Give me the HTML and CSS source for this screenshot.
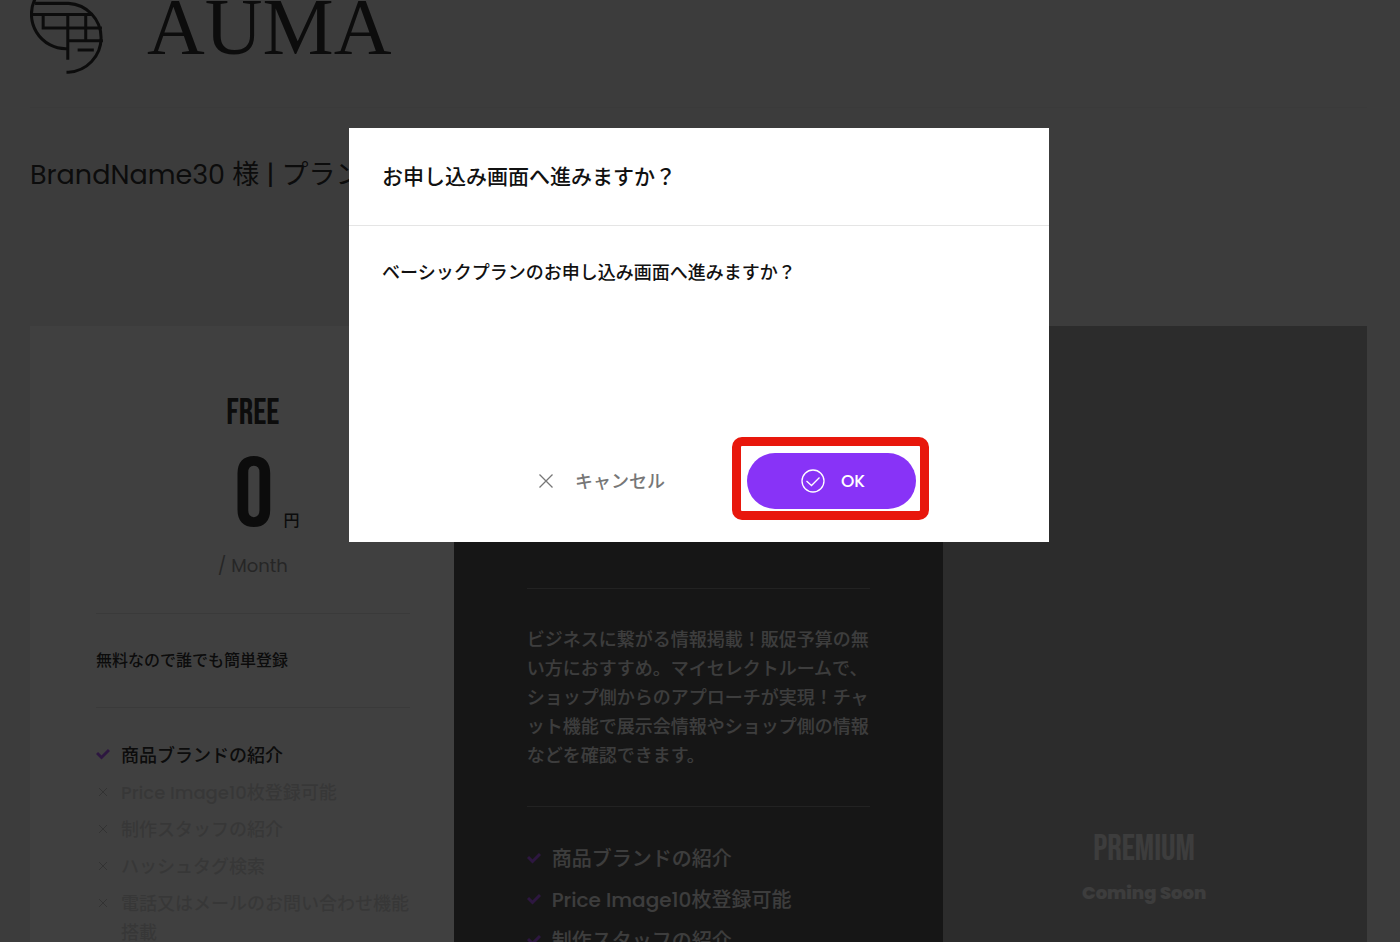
FILE: index.html
```html
<!DOCTYPE html>
<html lang="ja">
<head>
<meta charset="UTF-8" />
<meta name="viewport" content="width=device-width, initial-scale=1" />
<title>AUMA</title>
<link rel="stylesheet" href="styles.css">
</head>
<body>

<div class="page">
  <header class="header">
    <svg class="logo-mark" viewBox="30 0 75 73" width="75" height="73" fill="none" stroke="currentColor" stroke-width="3" aria-hidden="true">
      <path d="M35 3.3H68A34 34 0 0 1 68 71.2H66" />
      <path d="M36 -3A34 34 0 0 0 67 48" />
      <path d="M32 14.3H92M43 14.3V27.6H101M67.3 14.3V59M85 14.3V40M67.3 40.3H102M77 49.3H93" />
    </svg>
    <span class="logo-text">AUMA</span>
  </header>

  <h1 class="page-title">BrandName30 様 | プラン</h1>

  <main class="plans">
    <section class="plan plan-free">
      <h2 class="plan-name">FREE</h2>
      <p class="price"><span class="amount">0</span><span class="yen">円</span></p>
      <p class="month">/ Month</p>
      <p class="description">無料なので誰でも簡単登録</p>
      <ul class="features">
        <li><svg class="check" viewBox="0 0 14 14"><path d="M1 6L5.5 10.5L13 3" /></svg>商品ブランドの紹介</li>
        <li class="off"><svg class="cross" viewBox="0 0 14 14"><path d="M3 3L11 11M11 3L3 11" /></svg>Price Image10枚登録可能</li>
        <li class="off"><svg class="cross" viewBox="0 0 14 14"><path d="M3 3L11 11M11 3L3 11" /></svg>制作スタッフの紹介</li>
        <li class="off"><svg class="cross" viewBox="0 0 14 14"><path d="M3 3L11 11M11 3L3 11" /></svg>ハッシュタグ検索</li>
        <li class="off"><svg class="cross" viewBox="0 0 14 14"><path d="M3 3L11 11M11 3L3 11" /></svg>電話又はメールのお問い合わせ機能搭載</li>
      </ul>
    </section>

    <section class="plan plan-basic">
      <p class="description">ビジネスに繋がる情報掲載！販促予算の無い方におすすめ。マイセレクトルームで、ショップ側からのアプローチが実現！チャット機能で展示会情報やショップ側の情報などを確認できます。</p>
      <ul class="features">
        <li><svg class="check" viewBox="0 0 14 14"><path d="M1 6L5.5 10.5L13 3" /></svg>商品ブランドの紹介</li>
        <li><svg class="check" viewBox="0 0 14 14"><path d="M1 6L5.5 10.5L13 3" /></svg>Price Image10枚登録可能</li>
        <li><svg class="check" viewBox="0 0 14 14"><path d="M1 6L5.5 10.5L13 3" /></svg>制作スタッフの紹介</li>
      </ul>
    </section>

    <section class="plan plan-premium">
      <h2 class="plan-name">PREMIUM</h2>
      <p class="soon">Coming Soon</p>
    </section>
  </main>
</div>

<div class="overlay">
  <div class="modal" role="dialog" aria-modal="true" aria-labelledby="modalTitle">
    <h2 class="modal-title" id="modalTitle">お申し込み画面へ進みますか？</h2>
    <p class="modal-body">ベーシックプランのお申し込み画面へ進みますか？</p>
    <div class="modal-actions">
      <button type="button" class="btn btn-cancel">
        <svg viewBox="0 0 16 16" width="16" height="16"><path d="M1.5 1.5L14.5 14.5M14.5 1.5L1.5 14.5" /></svg>
        キャンセル
      </button>
      <button type="button" class="btn btn-ok">
        <svg viewBox="0 0 24 24" width="24" height="24"><circle cx="12" cy="12" r="11" /><path d="M5.5 12L10.5 16.5L18.5 8.5" /></svg>
        OK
      </button>
    </div>
  </div>
</div>

</body>
</html>
```
FILE: styles.css
```css
/* Base */
* {
  box-sizing: border-box;
}
body {
  margin: 0;
  height: 100vh;
  overflow: hidden;
  background: #efefef;
  color: #333;
  font-family: Poppins, Inter, "Noto Sans CJK JP", sans-serif;
  font-size: 18px;
  font-weight: 500;
  line-height: 29px;
}
h1, h2, p, ul {
  margin: 0;
  padding: 0;
}
svg {
  flex: none;
}

/* Header */
.page {
  padding: 0 33px 0 30px;
}
.header {
  display: flex;
  gap: 41px;
  height: 108px;
  border-bottom: 1px solid #e6e6e6;
}
.logo-mark {
  width: 76px;
  height: 74px;
}
.logo-text {
  font-family: "Liberation Serif", serif;
  font-size: 80px;
  font-weight: 400;
  line-height: 54px;
}
.page-title {
  padding: 46px 0 130px;
  font-size: 27px;
  font-weight: 400;
  line-height: 42px;
}

/* Plans */
.plans {
  display: grid;
  grid-template-columns: repeat(3, 1fr);
  min-height: 1100px;
}
.plan {
  padding: 66px;
  background: #fff;
}
.plan-name, .amount {
  font-family: "Bebas Neue", "Roboto Condensed", "Liberation Sans Narrow", "DejaVu Sans Condensed", sans-serif;
  font-weight: 400;
}
.plan-name {
  font-size: 36px;
  line-height: 44px;
  text-align: center;
}
.price {
  display: flex;
  justify-content: center;
  align-items: baseline;
  gap: 10px;
  padding: 11px 0 0 28px;
}
.amount {
  font-size: 98px;
  line-height: 100px;
}
.yen {
  font-size: 16px;
}
.month {
  padding: 4px 0 33px;
  color: #999;
  font-weight: 400;
  text-align: center;
}
.description {
  padding: 32px 0;
  border-top: 1px solid #e6e6e6;
  border-bottom: 1px solid #e6e6e6;
  line-break: loose;
}
.plan-free .description {
  font-size: 16px;
}
.features {
  display: flex;
  flex-direction: column;
  gap: 8px;
  padding-top: 33px;
  list-style: none;
}
.features li {
  display: flex;
  gap: 11px;
}
.features .off {
  color: #dcdcdc;
}
.check, .cross {
  width: 14px;
  height: 14px;
  margin-top: 6px;
  fill: none;
}
.check {
  stroke: #b45cff;
  stroke-width: 3;
}
.cross {
  margin-top: 7px;
  stroke: #ccc;
}

/* The middle plan stands out over its neighbours */
.plan-basic {
  z-index: 1;
  margin: -22px -22px 0;
  padding: 284px 73px 73px;
  background: #585858;
  color: #f4f4f4;
}
.plan-basic .description {
  padding: 36px 0;
  border-color: #888;
}
.plan-basic .features {
  gap: 12px;
  padding-top: 38px;
  font-size: 20px;
}
.plan-premium {
  padding-top: 502px;
  background: #b0b0b0;
  color: #f4f4f4;
}
.soon {
  padding-top: 6px;
  font-weight: 800;
  text-align: center;
}

/* Modal */
.overlay {
  position: fixed;
  inset: 0;
  z-index: 10;
  display: flex;
  justify-content: center;
  align-items: flex-start;
  padding: 128px 22px 20px 20px;
  background: rgba(0, 0, 0, 0.75);
}
.modal {
  width: 100%;
  max-width: 700px;
  padding-bottom: 33px;
  background: #fff;
  color: #111;
}
.modal-title {
  padding: 33px;
  border-bottom: 1px solid #e5e5e5;
  font-size: 21px;
  font-weight: 500;
  line-height: 31px;
}
.modal-body {
  min-height: 227px;
  padding: 32px 33px;
}
.modal-actions {
  display: flex;
  justify-content: center;
  gap: 26px;
}
.btn {
  position: relative;
  display: flex;
  align-items: center;
  height: 56px;
  border: none;
  border-radius: 28px;
  font: inherit;
  cursor: pointer;
}
.btn svg {
  fill: none;
  stroke: currentColor;
  stroke-width: 1.3;
}
.btn-cancel {
  gap: 21px;
  padding: 0 56px;
  background: none;
  color: #777;
}
.btn-ok {
  gap: 16px;
  padding: 0 51px 0 54px;
  background: #8833f7;
  color: #fff;
  font-size: 17px;
}
.btn-ok::after {
  content: "";
  position: absolute;
  inset: -16px -13px -11px -15px;
  border: 9px solid #e8170c;
  border-radius: 10px;
}
```
